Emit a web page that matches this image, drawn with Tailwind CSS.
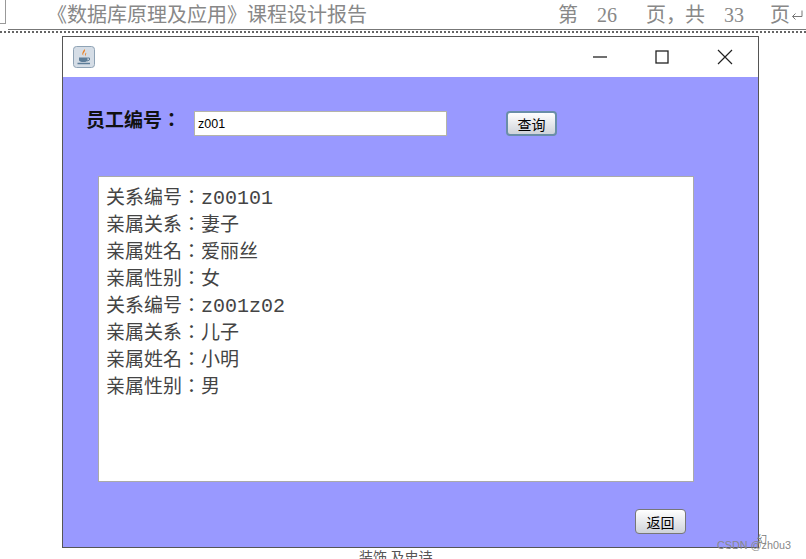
<!DOCTYPE html>
<html>
  <head>
    <meta charset="UTF-8" />
    <meta name="viewport" content="width=device-width, initial-scale=1.0" />
    <script src="https://cdn.jsdelivr.net/npm/@tailwindcss/browser@4"></script>
  </head>
  <body class="bg-white">
    <div class="relative h-[559px] w-[806px] overflow-hidden font-['Liberation_Serif','Noto_Sans_CJK_SC',serif]">
      <!-- Word page header -->
      <div class="relative flex h-[29px] items-start pl-[47px] pt-[3px] text-[20px] leading-[24px] text-[#888]">
        <div class="absolute left-0 top-0 h-[24px] w-[6px] border-r border-b border-[#999]"></div>
        <span class="w-[511px] whitespace-nowrap">《数据库原理及应用》课程设计报告</span>
        <span class="w-[39px]">第</span>
        <span class="w-[49px]">26</span>
        <span class="w-[39px]">页，</span>
        <span class="w-[39px]">共</span>
        <span class="w-[46px]">33</span>
        <span>页</span>
        <svg class="ml-[1px] mt-[6px]" width="12" height="12" viewBox="0 0 12 12" fill="none" stroke="#777">
          <path d="M11 1.5V7.5H1.5M4.5 4.5L1.5 7.5L4.5 10.5" />
        </svg>
      </div>
      <div class="ml-[8px] h-px bg-[#777]"></div>
      <div class="mt-px h-[2px] border-t-2 border-dotted border-[#666]"></div>

      <!-- Java window -->
      <div class="ml-[62px] mt-[3px] h-[512px] w-[697px] border border-[#555] bg-[#9999ff]">
        <div class="flex h-[40px] items-center bg-white pl-[10px]">
          <svg width="22" height="22" viewBox="0 0 22 22">
            <rect x="0.5" y="0.5" width="21" height="21" rx="3" fill="#d5dde6" stroke="#8fa3b5" />
            <path d="M11.5 3C13.5 5.5 9 7 10.5 9.5C8 8 10 5.5 11.5 3ZM13 6.5C14 8 12 9 12.5 10.5C11.5 9 12 8 13 6.5Z" fill="#e8832a" />
            <path d="M6 11.5H14.5V14C14.5 15.5 13 16 10.5 16C8 16 6 15.5 6 14Z" fill="#5d7d98" />
            <path d="M14.5 12H16.5V14L14 15" fill="none" stroke="#5d7d98" />
            <path d="M4.5 17.5H17" stroke="#5d7d98" stroke-width="1.5" />
          </svg>
          <svg class="ml-[497px]" width="16" height="16" viewBox="0 0 16 16" fill="none" stroke="#222" stroke-width="1.3">
            <path d="M1 8H15" />
          </svg>
          <svg class="ml-[47px]" width="14" height="14" viewBox="0 0 14 14" fill="none" stroke="#222" stroke-width="1.3">
            <rect x="1" y="1" width="12" height="12" />
          </svg>
          <svg class="ml-[48px]" width="16" height="16" viewBox="0 0 16 16" fill="none" stroke="#222" stroke-width="1.2">
            <path d="M1 1L15 15M15 1L1 15" />
          </svg>
        </div>

        <div class="flex h-[99px] items-start pl-[23px] pt-[33px] font-['Liberation_Serif','Noto_Sans_CJK_TC',serif]">
          <span class="mt-[1px] w-[108px] whitespace-nowrap text-[19px] leading-[20px] font-bold text-[#111]">员工编号：</span>
          <input class="mt-[1px] h-[25px] w-[253px] border border-[#b5b5a8] bg-white pl-[3px] font-['Liberation_Sans',sans-serif] text-[12.5px] text-black" type="text" value="z001" />
          <button class="ml-[59px] mt-[1px] h-[25px] w-[51px] rounded-[4px] border-2 border-[#6a8ea8] bg-gradient-to-b from-white to-[#cfd3da] text-[14px] leading-[20px] text-black font-['Noto_Sans_CJK_SC',sans-serif]">查询</button>
        </div>

        <div class="ml-[35px] grid h-[306px] w-[596px] auto-rows-[27px] border border-[#aaa] bg-white pl-[7px] pt-[7px] font-['Liberation_Serif','Noto_Sans_CJK_TC',serif] text-[19px] leading-[27px] text-[#444]">
          <div>关系编号：<span class="font-['Liberation_Mono',monospace] text-[20px]">z00101</span></div>
          <div>亲属关系：妻子</div>
          <div>亲属姓名：爱丽丝</div>
          <div>亲属性别：女</div>
          <div>关系编号：<span class="font-['Liberation_Mono',monospace] text-[20px]">z001z02</span></div>
          <div>亲属关系：儿子</div>
          <div>亲属姓名：小明</div>
          <div>亲属性别：男</div>
        </div>

        <div class="flex justify-end pr-[72px] pt-[27px]">
          <button class="h-[25px] w-[51px] rounded-[4px] border border-[#777] bg-gradient-to-b from-white to-[#cfd3da] text-[14px] leading-[20px] text-black font-['Noto_Sans_CJK_SC',sans-serif]">返回</button>
        </div>
      </div>

      <!-- text of the page below the window, cut off by the screenshot -->
      <div class="pl-[359px] pt-[1px] text-[14px] leading-[18px] text-[#555]">装饰 及史诗</div>

      <!-- CSDN watermark and the stray mark under it -->
      <div class="absolute left-[757px] top-[534px] text-[10px] leading-[12px] text-[#777]">幻</div>
      <div class="absolute left-[717px] top-[538px] font-['Liberation_Sans',sans-serif] text-[10.8px] leading-[14px] text-[#888]">CSDN @zh0u3</div>
    </div>
  </body>
</html>
